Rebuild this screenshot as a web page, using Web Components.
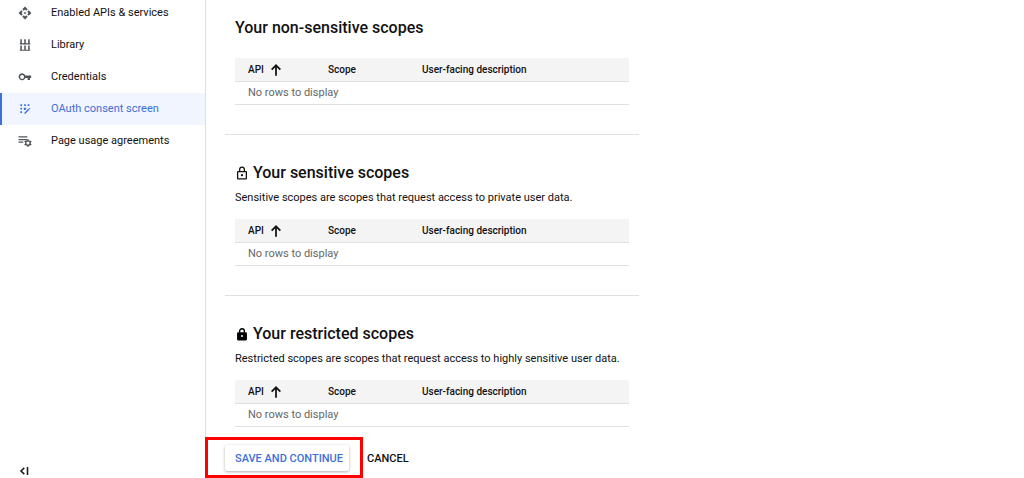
<!DOCTYPE html>
<html lang="en">
<head>
<meta charset="utf-8">
<title>OAuth consent screen</title>
<style>
  body { margin: 0; background: #fff; color: #111; font: 11px/16px Roboto, sans-serif; }
</style>
</head>
<body>
<console-app></console-app>

<template id="app-t">
  <style>
    :host { display: flex; min-height: 100vh; overflow: hidden; }
    main { flex: 1; min-width: 0; padding: 0 19px 7px; }
    .column { max-width: 414px; }
  </style>
  <side-nav></side-nav>
  <main><div class="column">
    <scope-section heading="Your non-sensitive scopes"></scope-section>
    <scope-section heading="Your sensitive scopes" lock="outline">Sensitive scopes are scopes that request access to private user data.</scope-section>
    <scope-section heading="Your restricted scopes" lock="solid">Restricted scopes are scopes that request access to highly sensitive user data.</scope-section>
    <form-actions></form-actions>
  </div></main>
</template>

<template id="nav-t">
  <style>
    :host { display: flex; flex-direction: column; justify-content: space-between; flex: none; width: 205px; border-right: 1px solid #e0e0e0; }
    nav { margin-top: -3px; }
    button { display: flex; align-self: flex-start; margin: 0 0 0 18px; padding: 0; border: 0; background: none; color: #202124; }
    svg { display: block; width: 14px; height: 14px; fill: currentColor; }
  </style>
  <nav aria-label="APIs and services">
    <nav-item icon="api">Enabled APIs &amp; services</nav-item>
    <nav-item icon="library">Library</nav-item>
    <nav-item icon="key">Credentials</nav-item>
    <nav-item icon="consent" active>OAuth consent screen</nav-item>
    <nav-item icon="agreements">Page usage agreements</nav-item>
  </nav>
  <button type="button" aria-label="Collapse menu"><svg viewBox="0 0 14 14"><path d="M6.300 3.900 3 7l3.300 3.100M9.500 3v8" fill="none" stroke="currentColor" stroke-width="1.600"/></svg></button>
</template>

<template id="item-t">
  <style>
    :host { display: block; }
    a { display: flex; align-items: center; gap: 19px; height: 32px; padding-left: 18px; color: #111; text-decoration: none; font-size: 11px; box-sizing: border-box; }
    svg { width: 14px; height: 14px; fill: #505357; flex: none; }
    :host([active]) a { background: #f0f5ff; color: #3f6fd9; box-shadow: inset 2px 0 #3f6fd9; }
    :host([active]) svg { fill: #3f6fd9; }
  </style>
  <a href="#"><svg viewBox="0 0 24 24" aria-hidden="true"></svg><span><slot></slot></span></a>
</template>

<template id="section-t">
  <style>
    :host { display: block; padding: 26px 10px 29px; border-bottom: 1px solid #e0e0e0; }
    :host(:first-of-type) { padding-top: 16px; }
    :host(:last-of-type) { padding-bottom: 18px; border-bottom: 0; }
    h2 { display: flex; align-items: center; gap: 4px; margin: 0; font-size: 16px; line-height: 24px; font-weight: 500; }
    h2 svg { width: 14px; height: 14px; flex: none; }
    p { margin: 5px 0 -5px; font-size: 11px; line-height: 16px; }
    table { width: 100%; margin-top: 18px; border-collapse: separate; border-spacing: 0; table-layout: fixed; line-height: 16px; text-align: left; }
    th { height: 23px; padding: 0; background: #f4f4f4; border-bottom: 1px solid #e0e0e0; font-size: 10px; font-weight: 500; }
    td { height: 22px; padding: 0 0 0 13px; border-bottom: 1px solid #e0e0e0; color: #666; font-size: 11px; }
    th:first-child { width: 80px; padding-left: 13px; }
    th:nth-child(2) { width: 94px; }
    .sort { display: flex; align-items: center; gap: 5px; }
    .sort svg { width: 14px; height: 14px; }
  </style>
  <h2><span></span></h2>
  <p><slot></slot></p>
  <table>
    <thead><tr><th scope="col"><span class="sort">API <svg viewBox="0 0 24 24" aria-hidden="true"><path d="M12 22V4M4.500 11.500 12 4l7.500 7.500" fill="none" stroke="#111" stroke-width="3"/></svg></span></th><th scope="col">Scope</th><th scope="col">User-facing description</th></tr></thead>
    <tbody><tr><td colspan="3">No rows to display</td></tr></tbody>
  </table>
</template>

<template id="actions-t">
  <style>
    :host { display: flex; align-items: center; gap: 18px; }
    .marked { position: relative; }
    .marked::after { content: ""; position: absolute; inset: -8px -14px -7px -20px; border: 3px solid #f00; pointer-events: none; }
    button { display: block; height: 26px; padding: 2px 0 0; border: 0; border-radius: 2px; background: #fff; color: #111; font: 500 11px/16px Roboto, sans-serif; }
    .save { padding: 2px 6px 0 10px; color: #3f6fd9; box-shadow: 0 1px 3px rgba(0,0,0,.32); }
  </style>
  <span class="marked"><button class="save" type="button">SAVE AND CONTINUE</button></span>
  <button type="button">CANCEL</button>
</template>

<script>
  const ICONS = {
    api: '<path d="M14 12l-2 2-2-2 2-2zM12 6l2.120 2.120 2.500-2.500L12 1 7.380 5.620l2.500 2.500zM6 12l2.120-2.120-2.500-2.500L1 12l4.620 4.620 2.500-2.500zM18 12l-2.120 2.120 2.500 2.500L23 12l-4.620-4.620-2.500 2.500zM12 18l-2.120-2.120-2.500 2.500L12 23l4.620-4.620-2.500-2.500z"/>',
    library: '<path d="M3 9h18v2H3zM4 2h2.600v8H4zM10.700 2h2.600v8h-2.600zM17.400 2H20v8h-2.600zM3 20h18v2H3zM4 13h2.600v8H4zM10.700 13h2.600v8h-2.600zM17.400 13H20v8h-2.600z"/>',
    key: '<path fill-rule="evenodd" d="M12.600 9.500H22.500v4.300h-2V17h-4v-3.200h-3.900a6 6 0 1 1 0-4.300zM7 8.600a3.400 3.400 0 1 0 0 6.800 3.400 3.400 0 0 0 0-6.800z"/>',
    consent: '<path d="M10.500 4h3v3h-3zM4 16h3v3H4zM4 10h3v3H4zM4 4h3v3H4zM16.500 4h3v3h-3zM14 12.420V10h-4v3.500h2.900zM20.880 11.290l-1.170-1.170a.41.41 0 0 0-.58 0l-.88.88L20 12.750l.88-.88a.41.41 0 0 0 0-.58zM11 18.250V20h1.750l6.670-6.670-1.750-1.750z"/>',
    agreements: '<path d="M1 4h15v2.200H1zM1 8.500h15v2.200H1zM1 13h8v2.200H1z"/><circle cx="17" cy="15.500" r="3.800" fill="none" stroke="currentColor" stroke-width="2.400" color="#505357"/><path d="M15.700 9h2.600v2.500h-2.600zM15.700 19.500h2.600V22h-2.600zM10.700 13.300l1.300-2.200 2.300 1.300-1.300 2.200zM19.700 18.600l1.300-2.200 2.300 1.300-1.300 2.200zM10.700 17.700l2.300-1.300 1.300 2.200-2.300 1.300zM19.700 12.400l2.300-1.300 1.300 2.200-2.300 1.300z"/>'
  };
  const LOCKS = {
    outline: '<rect x="4.500" y="9.500" width="15" height="12.500" rx="1" fill="none" stroke="#111" stroke-width="2.200"/><path d="M8 9V6a4 4 0 0 1 8 0v3" fill="none" stroke="#111" stroke-width="2.200"/><circle cx="12" cy="15.500" r="2" fill="#111"/>',
    solid: '<rect x="3.500" y="9" width="17" height="14" rx="2" fill="#000"/><path d="M8 10V7a4 4 0 0 1 8 0v3" fill="none" stroke="#000" stroke-width="2.400"/><circle cx="12" cy="15.500" r="1.700" fill="#fff"/>'
  };

  class Base extends HTMLElement {
    constructor() {
      super();
      this.attachShadow({ mode: 'open' }).append(
        document.getElementById(this.constructor.template).content.cloneNode(true));
    }
  }
  class NavItem extends Base {
    static template = 'item-t';
    connectedCallback() {
      this.shadowRoot.querySelector('svg').innerHTML = ICONS[this.getAttribute('icon')];
      if (this.hasAttribute('active')) this.shadowRoot.querySelector('a').setAttribute('aria-current', 'page');
    }
  }
  class SideNav extends Base { static template = 'nav-t'; }
  class ScopeSection extends Base {
    static template = 'section-t';
    connectedCallback() {
      const title = this.shadowRoot.querySelector('h2');
      title.querySelector('span').textContent = this.getAttribute('heading');
      const lock = this.getAttribute('lock');
      if (lock && !title.querySelector('svg'))
        title.insertAdjacentHTML('afterbegin', `<svg viewBox="0 0 24 24" aria-hidden="true">${LOCKS[lock]}</svg>`);
      this.shadowRoot.querySelector('p').hidden = !this.textContent.trim();
    }
  }
  class FormActions extends Base { static template = 'actions-t'; }
  class ConsoleApp extends Base { static template = 'app-t'; }
  customElements.define('nav-item', NavItem);
  customElements.define('side-nav', SideNav);
  customElements.define('scope-section', ScopeSection);
  customElements.define('form-actions', FormActions);
  customElements.define('console-app', ConsoleApp);
</script>
</body>
</html>
